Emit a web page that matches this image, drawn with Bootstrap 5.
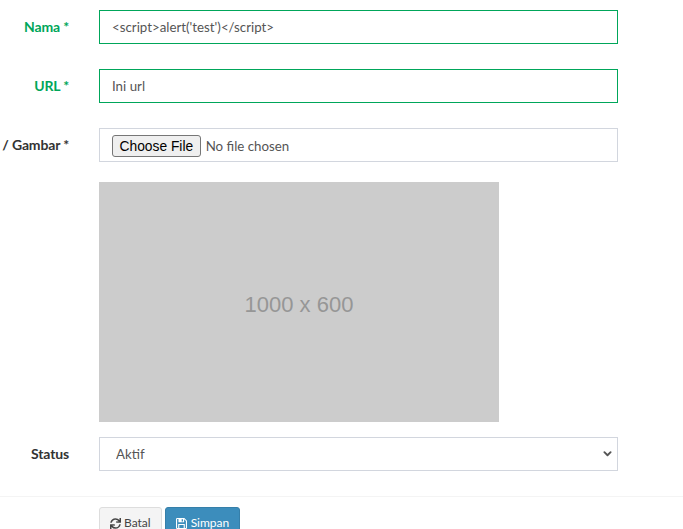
<!DOCTYPE html>
<html lang="id">
<head>
<meta charset="utf-8">
<title>Form</title>
<link href="https://cdn.jsdelivr.net/npm/bootstrap@5.3.0/dist/css/bootstrap.min.css" rel="stylesheet">
<style>
html,body{height:529px;overflow:hidden;background:#fff}
body{font-family:Lato,"Noto Sans",sans-serif;font-size:14px;color:#333}
.frm-wrap{padding-top:10px}
.frm-row{display:flex;align-items:center;gap:30px;padding-right:65px}
.frm-gap-lg{margin-bottom:25px}
.frm-gap-md{margin-bottom:20px}
.frm-gap-sm{margin-bottom:15px}
.frm-label{flex:0 0 69px;min-width:0;margin:0;padding-bottom:2px;white-space:nowrap;font-weight:700;letter-spacing:-.15px;color:#333;display:flex;justify-content:flex-end}
.frm-label.is-ok{color:#00a65a}
.frm-field{flex:1 1 auto;min-width:0}
.form-control,.form-select{height:34px;border:1px solid #d2d6de;border-radius:0;font-size:13.3px;color:#555;padding:6px 12px;line-height:20px;box-shadow:none}
.form-control.is-ok{border-color:#00a65a}
.form-select{padding-left:16px;background-position:right 3px center;background-size:13px 10px;background-image:url("data:image/svg+xml,%3csvg xmlns='http://www.w3.org/2000/svg' viewBox='0 0 16 16'%3e%3cpath fill='none' stroke='%23555' stroke-linecap='round' stroke-linejoin='round' stroke-width='3' d='m3 5 5 5 5-5'/%3e%3c/svg%3e")}
.form-control[type=file]{padding:6px 12px;line-height:20px}
.form-control[type=file]::file-selector-button,.form-control[type=file]:hover:not(:disabled):not([readonly])::file-selector-button{height:22px;margin:0;padding:1px 6.5px 0;background:#efefef;color:#000;border:1px solid #767676;border-radius:3px;font-family:"Liberation Sans",Arial,sans-serif;font-size:13.8px;line-height:20px;margin-inline-end:5px}
.frm-thumb{width:400px;height:240px;padding-top:5px;background:#ccc;color:#969696;font-family:"Liberation Sans",Arial,sans-serif;font-size:22px}
.frm-rule{margin:25px 0 10px;border:0;border-top:1px solid #f4f4f4;opacity:1}
.frm-actions{display:flex;gap:3px;padding-left:99px}
.frm-btn{height:34px;padding:5px 10px 7px;font-size:12px;line-height:20px;border-radius:3px;display:inline-flex;gap:3px;align-items:center;align-self:flex-start}
.frm-btn svg{flex:0 0 11px;width:11px;height:11px;fill:currentColor}
.frm-btn.btn-light{background:#f4f4f4;border:1px solid #ddd;color:#444}
.frm-btn.btn-primary{gap:4px;background:#3c8dbc;border:1px solid #367fa9;color:#fff}
</style>
</head>
<body>
<form class="frm-wrap">
  <div class="frm-row frm-gap-lg">
    <label class="frm-label is-ok" for="f-nama">Nama *</label>
    <div class="frm-field"><input id="f-nama" type="text" class="form-control is-ok" value="&lt;script&gt;alert('test')&lt;/script&gt;"></div>
  </div>
  <div class="frm-row frm-gap-lg">
    <label class="frm-label is-ok" for="f-url">URL *</label>
    <div class="frm-field"><input id="f-url" type="text" class="form-control is-ok" value="Ini url"></div>
  </div>
  <div class="frm-row frm-gap-md">
    <label class="frm-label" for="f-img">/ Gambar *</label>
    <div class="frm-field"><input id="f-img" type="file" class="form-control"></div>
  </div>
  <div class="frm-row frm-gap-sm">
    <div class="frm-label"></div>
    <div class="frm-field"><div class="frm-thumb d-flex align-items-center justify-content-center">1000 x 600</div></div>
  </div>
  <div class="frm-row">
    <label class="frm-label" for="f-status">Status</label>
    <div class="frm-field"><select id="f-status" class="form-select"><option>Aktif</option><option>Nonaktif</option></select></div>
  </div>
  <hr class="frm-rule">
  <div class="frm-actions">
    <button type="button" class="btn btn-light frm-btn"><svg viewBox="0 0 512 512" aria-hidden="true"><path d="M440.65 12.57l4 82.77A247.16 247.16 0 0 0 255.83 8C134.73 8 33.91 94.92 12.29 209.82A12 12 0 0 0 24.09 224h49.05a12 12 0 0 0 11.67-9.26 175.91 175.91 0 0 1 317-56.94l-101.46-4.86a12 12 0 0 0-12.57 12v47.41a12 12 0 0 0 12 12H500a12 12 0 0 0 12-12V12a12 12 0 0 0-12-12h-47.37a12 12 0 0 0-11.98 12.57zM255.83 432a175.61 175.61 0 0 1-146-77.8l101.8 4.87a12 12 0 0 0 12.57-12v-47.4a12 12 0 0 0-12-12H12a12 12 0 0 0-12 12V500a12 12 0 0 0 12 12h47.35a12 12 0 0 0 12-12.6l-4.15-82.57A247.17 247.17 0 0 0 255.83 504c121.11 0 221.93-86.92 243.55-201.82a12 12 0 0 0-11.8-14.18h-49.05a12 12 0 0 0-11.67 9.26A175.86 175.86 0 0 1 255.83 432z"/></svg>Batal</button>
    <button type="button" class="btn btn-primary frm-btn"><svg viewBox="0 0 448 448" aria-hidden="true"><path fill-rule="evenodd" d="M50 0H340L448 108V398A50 50 0 0 1 398 448H50A50 50 0 0 1 0 398V50A50 50 0 0 1 50 0ZM45 45V403H90V240H358V403H403V125L330 50V175H100V45ZM135 285V403H313V285ZM230 55H285V140H230Z"/></svg>Simpan</button>
  </div>
</form>
<script src="https://cdn.jsdelivr.net/npm/bootstrap@5.3.0/dist/js/bootstrap.bundle.min.js"></script>
</body>
</html>
